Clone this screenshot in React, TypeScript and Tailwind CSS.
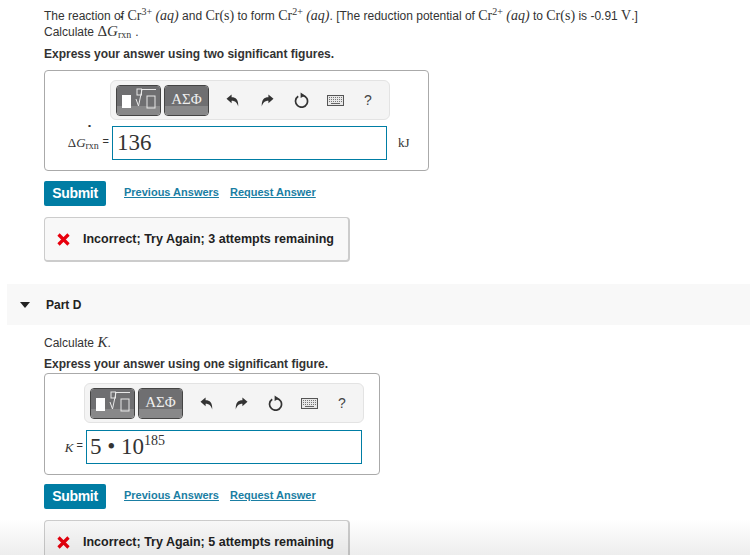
const sans = "font-['Liberation_Sans',Arial,sans-serif]";

function UndoIcon({ flip }: { flip?: boolean }) {
  return (
    <svg width="13" height="13" viewBox="0 0 13 13" className={flip ? "-scale-x-100" : ""}>
      <path d="M0.5 4.8 L5.6 0.6 V3.2 C9.8 3.2 12.6 5.6 12.2 12.4 C11 8.8 9.4 6.9 5.6 6.8 V9.2 Z" fill="#333" />
    </svg>
  );
}

function RedoCircle() {
  return (
    <svg width="15" height="16" viewBox="0 0 15 16">
      <path d="M8.6 3.3 A6 6 0 1 1 4.2 4.2" fill="none" stroke="#333" strokeWidth="1.7" />
      <path d="M6.6 0.4 L11 3.4 L6.6 6 Z" fill="#333" />
    </svg>
  );
}

function KeyboardIcon() {
  return (
    <svg width="17" height="11" viewBox="0 0 17 11">
      <rect x="0.5" y="0.5" width="16" height="10" fill="#e8e8e8" stroke="#555" />
      <path d="M2 2.5 H15 M2 4.5 H15 M2 6.5 H15" stroke="#777" strokeDasharray="1 1" />
      <path d="M4 8.5 H13" stroke="#666" />
    </svg>
  );
}

function MatrixButton() {
  return (
    <div className="relative flex h-[31px] w-[45px] overflow-hidden rounded-[4px] border border-[#444]">
      <div className="flex w-full flex-col">
        <div className="h-[20px] bg-[#6f6f71]" />
        <div className="flex-1 bg-[#888889]" />
      </div>
      <svg width="45" height="31" viewBox="0 0 45 31" className="absolute left-0 top-0">
        <rect x="5" y="9" width="9" height="13" fill="#fff" />
        <rect x="20" y="3" width="4.5" height="6" fill="none" stroke="#e8e8e8" />
        <path d="M19 13 L21.5 20 L25 3.5 H39" fill="none" stroke="#e8e8e8" />
        <rect x="30" y="10" width="8" height="12" fill="none" stroke="#e8e8e8" />
      </svg>
    </div>
  );
}

function GreekButton() {
  return (
    <div className="relative flex h-[31px] w-[45px] overflow-hidden rounded-[4px] border border-[#444]">
      <div className="flex w-full flex-col">
        <div className="h-[20px] bg-[#6f6f71]" />
        <div className="flex-1 bg-[#888889]" />
      </div>
      <span className="absolute inset-x-0 top-[3px] text-center font-['Liberation_Serif',serif] text-[15px] leading-[20px] text-[#eee]">
        ΑΣΦ
      </span>
    </div>
  );
}

function Toolbar() {
  return (
    <div className="flex h-[40px] w-[280px] items-center rounded-[6px] border border-[#e3e3e3] bg-[#f4f4f4] pl-[5px]">
      <MatrixButton />
      <div className="ml-[3px]">
        <GreekButton />
      </div>
      <div className="ml-[15px] flex w-[16px] justify-center">
        <UndoIcon />
      </div>
      <div className="ml-[19px] flex w-[16px] justify-center">
        <UndoIcon flip />
      </div>
      <div className="ml-[18px] flex w-[16px] justify-center">
        <RedoCircle />
      </div>
      <div className="ml-[17px] flex w-[18px] justify-center">
        <KeyboardIcon />
      </div>
      <span className={`ml-[20px] text-[14px] text-[#444] ${sans}`}>?</span>
    </div>
  );
}

function DeltaG({ small }: { small?: boolean }) {
  return (
    <span className={`font-['Liberation_Serif',serif] text-[#333] ${small ? "text-[13px]" : "text-[15px]"}`}>
      Δ<i>G</i>
      <span className="relative inline-block w-[14px]">
        <span className="absolute left-[1px] top-[-10px] text-[8px] leading-none">∘</span>
        <span className={`${small ? "text-[10px]" : "text-[10px]"} relative top-[2px]`}>rxn</span>
      </span>
    </span>
  );
}

function Actions() {
  return (
    <div className="flex items-start">
      <button className={`h-[25px] w-[62px] rounded-[2px] bg-[#007da4] text-[14px] font-bold tracking-[-0.3px] text-white ${sans}`}>
        Submit
      </button>
      <a className={`ml-[18px] mt-[4px] text-[11px] leading-[15px] font-bold text-[#1a7ea3] underline ${sans}`}>
        Previous Answers
      </a>
      <a className={`ml-[11px] mt-[4px] text-[11px] leading-[15px] font-bold text-[#1a7ea3] underline ${sans}`}>
        Request Answer
      </a>
    </div>
  );
}

function Feedback({ attempts }: { attempts: number }) {
  return (
    <div className="flex h-[45px] w-[306px] items-center rounded-[4px] border border-[#ccc] border-r-2 border-b-2 bg-[#f8f8f8] pl-[12px]">
      <svg width="13" height="13" viewBox="0 0 13 13">
        <path d="M1.5 1.5 L11.5 11.5 M11.5 1.5 L1.5 11.5" stroke="#e8000d" strokeWidth="3.2" />
      </svg>
      <span className={`ml-[13px] text-[12.5px] font-bold text-[#222] ${sans}`}>
        Incorrect; Try Again; {attempts} attempts remaining
      </span>
    </div>
  );
}

export default function App() {
  return (
    <div className={`relative h-[555px] w-[750px] overflow-hidden bg-white text-[12px] text-[#333] ${sans}`}>
      <div className="pl-[44px]">
        {/* part C question */}
        <p className="h-[24px] whitespace-nowrap pt-[6px] leading-[20px]">
          The reaction of <Serif>Cr</Serif>
          <Sup>3+</Sup> <Serif><i>(aq)</i></Serif> and <Serif>Cr(s)</Serif> to form <Serif>Cr</Serif>
          <Sup>2+</Sup> <Serif><i>(aq)</i></Serif>. [The reduction potential of <Serif>Cr</Serif>
          <Sup>2+</Sup> <Serif><i>(aq)</i></Serif> to <Serif>Cr(s)</Serif> is -0.91 <Serif>V</Serif>.]
        </p>
        <p className="h-[20px] whitespace-nowrap leading-[14px]">
          Calculate <DeltaG /> .
        </p>
        <p className="mt-[2px] h-[24px] font-bold leading-[16px]">Express your answer using two significant figures.</p>

        <div className="flex h-[101px] w-[385px] flex-col rounded-[4px] border border-[#aaa] pt-[9px]">
          <div className="pl-[65px]">
            <Toolbar />
          </div>
          <div className="mt-[6px] flex items-center">
            <div className="flex w-[67px] justify-end pr-[3px] text-[11px] whitespace-nowrap">
              <DeltaG small />&nbsp;=
            </div>
            <div className="flex h-[34px] w-[275px] items-center border border-[#007da4] pl-[4px] font-['Liberation_Serif',serif] text-[23px] text-[#333]">
              136
            </div>
            <span className="ml-[11px] font-['Liberation_Serif',serif] text-[13px]">kJ</span>
          </div>
        </div>

        <div className="mt-[10px]">
          <Actions />
        </div>
        <div className="mt-[11px]">
          <Feedback attempts={3} />
        </div>
      </div>

      {/* part D */}
      <div className="ml-[7px] mt-[22px] flex h-[41px] items-center bg-[#f8f8f8]">
        <svg width="10" height="6" viewBox="0 0 10 6" className="ml-[13px]">
          <path d="M0 0 H10 L5 6 Z" fill="#222" />
        </svg>
        <span className="ml-[16px] text-[12px] font-bold text-[#222]">Part D</span>
      </div>

      <div className="pl-[44px]">
        <p className="mt-[9px] h-[22px] leading-[17px]">
          Calculate <Serif><i className="text-[15px]">K</i></Serif>.
        </p>
        <p className="h-[17px] font-bold leading-[16px]">Express your answer using one significant figure.</p>

        <div className="flex h-[102px] w-[336px] flex-col rounded-[4px] border border-[#aaa] pt-[9px]">
          <div className="pl-[39px]">
            <Toolbar />
          </div>
          <div className="mt-[7px] flex items-center">
            <div className="flex w-[41px] justify-end pr-[3px] whitespace-nowrap text-[11px]">
              <Serif><i className="text-[13px]">K</i></Serif>&nbsp;=
            </div>
            <div className="flex h-[34px] w-[276px] items-center border border-[#007da4] pl-[3px] font-['Liberation_Serif',serif] text-[23px] text-[#333]">
              5 • 10
              <span className="relative top-[-7px] text-[14px]">185</span>
            </div>
          </div>
        </div>

        <div className="mt-[9px]">
          <Actions />
        </div>
        <div className="mt-[11px]">
          <Feedback attempts={5} />
        </div>
      </div>

      <div className="absolute inset-x-0 bottom-0 h-[36px] bg-gradient-to-b from-transparent to-[#00000012]" />
    </div>
  );
}

function Serif({ children }: { children: React.ReactNode }) {
  return <span className="font-['Liberation_Serif',serif] text-[14px] text-[#333]">{children}</span>;
}

function Sup({ children }: { children: React.ReactNode }) {
  return <span className="relative top-[-5px] font-['Liberation_Serif',serif] text-[10px]">{children}</span>;
}
